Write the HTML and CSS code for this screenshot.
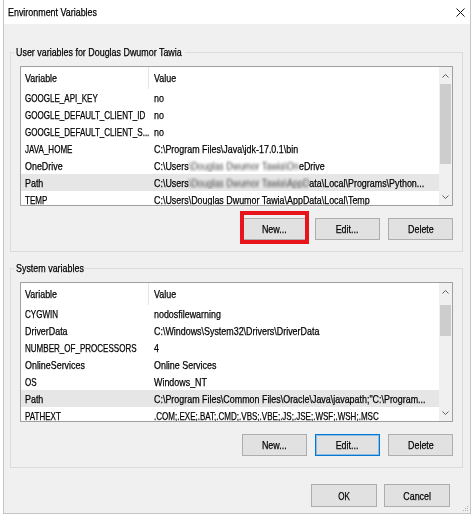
FILE: index.html
```html
<!DOCTYPE html>
<html>
<head>
<meta charset="utf-8">
<title>Environment Variables</title>
<link rel="stylesheet" href="styles.css">
</head>
<body>
<div class="window">
  <div class="titlebar">
    <span class="t">Environment Variables</span>
    <svg class="close" width="9" height="9" viewBox="0 0 9 9"><path d="M0.5 0.5L8.5 8.5M8.5 0.5L0.5 8.5" stroke="#111" stroke-width="1" fill="none"/></svg>
  </div>
  <div class="content">
    <fieldset class="group">
      <legend class="legend-user"><span class="t">User variables for Douglas Dwumor Tawia</span></legend>
      <div class="list">
        <div class="list-body">
          <div class="row head"><span class="c1"><span class="t">Variable</span></span><span class="c2"><span class="t">Value</span></span></div>
          <div class="row"><span class="c1"><span class="t caps">GOOGLE_API_KEY</span></span><span class="c2"><span class="t">no</span></span></div>
          <div class="row"><span class="c1"><span class="t caps">GOOGLE_DEFAULT_CLIENT_ID</span></span><span class="c2"><span class="t">no</span></span></div>
          <div class="row"><span class="c1"><span class="t caps">GOOGLE_DEFAULT_CLIENT_S...</span></span><span class="c2"><span class="t">no</span></span></div>
          <div class="row"><span class="c1"><span class="t caps">JAVA_HOME</span></span><span class="c2"><span class="t">C:\Program Files\Java\jdk-17.0.1\bin</span></span></div>
          <div class="row"><span class="c1"><span class="t">OneDrive</span></span><span class="c2"><span class="t">C:\Users<span class="blur">\Douglas Dwumor Tawia\On</span>eDrive</span></span></div>
          <div class="row sel"><span class="c1"><span class="t">Path</span></span><span class="c2"><span class="t">C:\Users<span class="blur">\Douglas Dwumor Tawia\AppD</span>ata\Local\Programs\Python...</span></span></div>
          <div class="row"><span class="c1"><span class="t caps">TEMP</span></span><span class="c2"><span class="t">C:\Users\Douglas Dwumor Tawia\AppData\Local\Temp</span></span></div>
        </div>
        <div class="scrollbar">
          <div class="arrow"><svg width="7" height="4" viewBox="0 0 7 4"><path d="M0.5 3.5L3.5 0.5L6.5 3.5" stroke="#606060" fill="none"/></svg></div>
          <div class="track"><div class="thumb thumb-user"></div></div>
          <div class="arrow"><svg width="7" height="4" viewBox="0 0 7 4"><path d="M0.5 0.5L3.5 3.5L6.5 0.5" stroke="#606060" fill="none"/></svg></div>
        </div>
      </div>
      <div class="buttons">
        <span class="mark"><button class="btn"><span class="t">New...</span></button><span class="redbox"></span></span>
        <button class="btn"><span class="t">Edit...</span></button>
        <button class="btn"><span class="t">Delete</span></button>
      </div>
    </fieldset>

    <fieldset class="group">
      <legend class="legend-sys"><span class="t">System variables</span></legend>
      <div class="list">
        <div class="list-body">
          <div class="row head"><span class="c1"><span class="t">Variable</span></span><span class="c2"><span class="t">Value</span></span></div>
          <div class="row"><span class="c1"><span class="t caps">CYGWIN</span></span><span class="c2"><span class="t">nodosfilewarning</span></span></div>
          <div class="row"><span class="c1"><span class="t">DriverData</span></span><span class="c2"><span class="t">C:\Windows\System32\Drivers\DriverData</span></span></div>
          <div class="row"><span class="c1"><span class="t caps">NUMBER_OF_PROCESSORS</span></span><span class="c2"><span class="t">4</span></span></div>
          <div class="row"><span class="c1"><span class="t">OnlineServices</span></span><span class="c2"><span class="t">Online Services</span></span></div>
          <div class="row"><span class="c1"><span class="t caps">OS</span></span><span class="c2"><span class="t">Windows_NT</span></span></div>
          <div class="row sel"><span class="c1"><span class="t">Path</span></span><span class="c2"><span class="t">C:\Program Files\Common Files\Oracle\Java\javapath;"C:\Program...</span></span></div>
          <div class="row"><span class="c1"><span class="t caps">PATHEXT</span></span><span class="c2"><span class="t caps">.COM;.EXE;.BAT;.CMD;.VBS;.VBE;.JS;.JSE;.WSF;.WSH;.MSC</span></span></div>
        </div>
        <div class="scrollbar">
          <div class="arrow"><svg width="7" height="4" viewBox="0 0 7 4"><path d="M0.5 3.5L3.5 0.5L6.5 3.5" stroke="#606060" fill="none"/></svg></div>
          <div class="track"><div class="thumb thumb-sys"></div></div>
          <div class="arrow"><svg width="7" height="4" viewBox="0 0 7 4"><path d="M0.5 0.5L3.5 3.5L6.5 0.5" stroke="#606060" fill="none"/></svg></div>
        </div>
      </div>
      <div class="buttons">
        <button class="btn"><span class="t">New...</span></button>
        <button class="btn default"><span class="t">Edit...</span></button>
        <button class="btn"><span class="t">Delete</span></button>
      </div>
    </fieldset>

    <div class="dialog-buttons">
      <button class="btn"><span class="t caps">OK</span></button>
      <button class="btn"><span class="t">Cancel</span></button>
    </div>
  </div>
  <div class="grip"><svg width="6" height="6" viewBox="0 0 6 6"><rect x="4" y="0" width="1" height="1" fill="#b0b0b0"/><rect x="2" y="2" width="1" height="1" fill="#b0b0b0"/><rect x="4" y="2" width="1" height="1" fill="#b0b0b0"/><rect x="0" y="4" width="1" height="1" fill="#b0b0b0"/><rect x="2" y="4" width="1" height="1" fill="#b0b0b0"/><rect x="4" y="4" width="1" height="1" fill="#b0b0b0"/></svg></div>
</div>
</body>
</html>
```

FILE: styles.css
```css
* { box-sizing: border-box; }
html, body { margin: 0; padding: 0; background: #fff; }
body {
  font-family: "Liberation Sans", Arial, sans-serif;
  font-size: 11px;
  color: #000;
}
/* Segoe-like condensed text: glyphs are narrowed horizontally */
.t {
  display: inline-block;
  white-space: nowrap;
  transform: scaleX(0.81);
  transform-origin: 0 50%;
  -webkit-text-stroke: 0.25px #000;
}
.t.caps { transform: scaleX(0.73); }
.btn .t { transform-origin: 50% 50%; }
.window {
  position: relative;
  margin-left: 3px;
  width: 468px;
  height: 514px;
  background: #f0f0f0;
  border: 1px solid #c4c4c4;
  border-top: none;
  display: flex;
  flex-direction: column;
}
.titlebar {
  height: 24px;
  flex: none;
  background: #fff;
  display: flex;
  align-items: center;
  justify-content: space-between;
  padding: 0 5px 0 4px;
  line-height: 14px;
}
.close { display: block; }
.content {
  padding: 21px 7px 0 6px;
  display: flex;
  flex-direction: column;
}
.group {
  margin: 0;
  padding: 7px 9px 11px;
  border: 1px solid #dcdcdc;
  min-width: 0;
}
.group + .group { margin-top: 9px; }
.group legend {
  padding: 0 2px;
  margin-left: -6px;
  line-height: 14px;
  overflow: visible;
  white-space: nowrap;
}
.legend-user { width: 171px; }
.legend-sys { width: 70px; }
.list {
  height: 140px;
  border: 1px solid #a0a0a0;
  background: #fff;
  display: flex;
}
.list-body { flex: 1; overflow: hidden; min-width: 0; }
.row {
  display: flex;
  height: 17px;
  align-items: center;
  white-space: nowrap;
}
.row.head { height: 22px; }
.row.sel { background: #e6e6e6; }
.c1 { width: 128px; flex: none; padding-left: 4px; overflow: hidden; }
.head .c1 {
  border-right: 1px solid #e5e5e5;
  align-self: stretch;
  display: flex;
  align-items: center;
}
.c2 { padding-left: 5px; flex: 1; overflow: hidden; }
.blur { filter: blur(1.4px); color: #444; -webkit-text-stroke: 0; }
.scrollbar {
  width: 13px;
  flex: none;
  background: #f0f0f0;
  display: flex;
  flex-direction: column;
}
.arrow {
  height: 17px;
  flex: none;
  display: flex;
  align-items: center;
  justify-content: center;
}
.arrow svg { display: block; }
.track { flex: 1; }
.thumb { margin: 0 1px; background: #cdcdcd; }
.thumb-user { height: 80px; }
.thumb-sys { margin-top: 5px; height: 31px; }
.buttons {
  display: flex;
  justify-content: flex-end;
  gap: 8px;
  margin-top: 12px;
}
.btn {
  width: 65px;
  height: 22px;
  font: inherit;
  color: #000;
  background: #e1e1e1;
  border: 1px solid #adadad;
  border-radius: 0;
  padding: 0;
  margin: 0;
  overflow: visible;
}
.btn.default {
  border-color: #0078d7;
  box-shadow: inset 0 0 0 1px rgba(0, 120, 215, 0.35);
}
.mark { position: relative; display: flex; }
.redbox {
  position: absolute;
  left: -2px;
  top: -7px;
  width: 69px;
  height: 33px;
  border: 4px solid #e8141c;
}
.dialog-buttons {
  display: flex;
  justify-content: flex-end;
  gap: 7px;
  padding-right: 13px;
  margin-top: 16px;
}
.dialog-buttons .btn { width: 66px; height: 23px; }
.grip {
  position: absolute;
  right: 1px;
  bottom: 1px;
  width: 6px;
  height: 6px;
}
.grip svg { display: block; }
```
